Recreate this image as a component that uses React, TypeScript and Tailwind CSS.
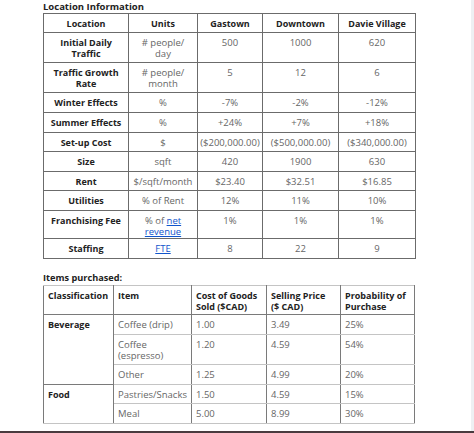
import React from "react";

const font = { fontFamily: '"Open Sans", "Noto Sans", sans-serif' };

type Row1 = { label: string; unit: React.ReactNode; g: string; d: string; v: string; h: string };

const rows1: Row1[] = [
  { label: "Initial Daily Traffic", unit: <>#&nbsp;people/<br />day</>, g: "500", d: "1000", v: "620", h: "h-[30px]" },
  { label: "Traffic Growth Rate", unit: <>#&nbsp;people/<br />month</>, g: "5", d: "12", v: "6", h: "h-[30px]" },
  { label: "Winter Effects", unit: "%", g: "-7%", d: "-2%", v: "-12%", h: "h-[20px]" },
  { label: "Summer Effects", unit: "%", g: "+24%", d: "+7%", v: "+18%", h: "h-[20px]" },
  { label: "Set-up Cost", unit: "$", g: "($200,000.00)", d: "($500,000.00)", v: "($340,000.00)", h: "h-[19px]" },
  { label: "Size", unit: "sqft", g: "420", d: "1900", v: "630", h: "h-[20px]" },
  { label: "Rent", unit: "$/sqft/month", g: "$23.40", d: "$32.51", v: "$16.85", h: "h-[19px]" },
  { label: "Utilities", unit: "% of Rent", g: "12%", d: "11%", v: "10%", h: "h-[20px]" },
  {
    label: "Franchising Fee",
    unit: (
      <>
        % of <span className="text-[#1155cc] underline">net</span>
        <br />
        <span className="text-[#1155cc] underline">revenue</span>
      </>
    ),
    g: "1%",
    d: "1%",
    v: "1%",
    h: "h-[28px]",
  },
  { label: "Staffing", unit: <span className="text-[#1155cc] underline">FTE</span>, g: "8", d: "22", v: "9", h: "h-[20px]" },
];

const c1 = "border border-[#6b6b6b] align-top text-center pt-[4px] pb-0 px-[2px] leading-[11px]";
const c2v = "border-x border-x-[#7a7a7a] border-y border-y-[#c4c4c4] align-top text-left pt-[4px] pb-0 px-[4px] leading-[11px]";

export default function App() {
  return (
    <div className="w-[474px] h-[433px] bg-white flex flex-col overflow-hidden" style={font}>
      <div className="flex flex-1 min-h-0">
        <div className="flex-1 pl-[43px]">
          <div className="text-[9.5px] leading-[13px] font-bold text-[#222] h-[13px]">Location Information</div>
          <table className="border-collapse table-fixed w-[373px] text-[9.5px]">
            <colgroup>
              <col className="w-[85px]" />
              <col className="w-[69px]" />
              <col className="w-[65px]" />
              <col className="w-[76px]" />
              <col className="w-[77px]" />
            </colgroup>
            <thead>
              <tr className="h-[19px] font-bold text-[#222] text-[9px]">
                <th className={c1}>Location</th>
                <th className={c1}>Units</th>
                <th className={c1}>Gastown</th>
                <th className={c1}>Downtown</th>
                <th className={c1}>Davie Village</th>
              </tr>
            </thead>
            <tbody>
              {rows1.map((r) => (
                <tr key={r.label} className={r.h}>
                  <td className={`${c1} font-bold text-[#222] text-[9px]`}>{r.label}</td>
                  <td className={`${c1} text-[#666]`}>{r.unit}</td>
                  <td className={`${c1} text-[#666]`}>{r.g}</td>
                  <td className={`${c1} text-[#666]`}>{r.d}</td>
                  <td className={`${c1} text-[#666]`}>{r.v}</td>
                </tr>
              ))}
            </tbody>
          </table>

          <div className="mt-[12px] text-[9.2px] leading-[13px] font-bold text-[#222] h-[14px]">Items purchased:</div>
          <table className="border-collapse table-fixed w-[372px] text-[9.5px] border border-[#6b6b6b]">
            <colgroup>
              <col className="w-[70px]" />
              <col className="w-[78px]" />
              <col className="w-[75px]" />
              <col className="w-[74px]" />
              <col className="w-[74px]" />
            </colgroup>
            <thead>
              <tr className="h-[29px] font-bold text-[#222] text-[9px]">
                <th className={`${c2v} border-b-[#7a7a7a] font-bold`}>Classification</th>
                <th className={`${c2v} border-b-[#7a7a7a] font-bold`}>Item</th>
                <th className={`${c2v} border-b-[#7a7a7a] font-bold`}>Cost of Goods<br />Sold ($CAD)</th>
                <th className={`${c2v} border-b-[#7a7a7a] font-bold`}>Selling Price<br />($ CAD)</th>
                <th className={`${c2v} border-b-[#7a7a7a] font-bold`}>Probability of<br />Purchase</th>
              </tr>
            </thead>
            <tbody className="text-[#666]">
              <tr className="h-[20px]">
                <td rowSpan={3} className={`${c2v} font-bold text-[#222] text-[9px] border-b-[#7a7a7a]`}>Beverage</td>
                <td className={c2v}>Coffee (drip)</td>
                <td className={c2v}>1.00</td>
                <td className={c2v}>3.49</td>
                <td className={c2v}>25%</td>
              </tr>
              <tr className="h-[30px]">
                <td className={c2v}>Coffee<br />(espresso)</td>
                <td className={c2v}>1.20</td>
                <td className={c2v}>4.59</td>
                <td className={c2v}>54%</td>
              </tr>
              <tr className="h-[20px]">
                <td className={c2v}>Other</td>
                <td className={c2v}>1.25</td>
                <td className={c2v}>4.99</td>
                <td className={c2v}>20%</td>
              </tr>
              <tr className="h-[19px]">
                <td rowSpan={2} className={`${c2v} font-bold text-[#222] text-[9px]`}>Food</td>
                <td className={c2v}>Pastries/Snacks</td>
                <td className={c2v}>1.50</td>
                <td className={c2v}>4.59</td>
                <td className={c2v}>15%</td>
              </tr>
              <tr className="h-[20px]">
                <td className={c2v}>Meal</td>
                <td className={c2v}>5.00</td>
                <td className={c2v}>8.99</td>
                <td className={c2v}>30%</td>
              </tr>
            </tbody>
          </table>
        </div>
        <div className="w-[3px] bg-[#eef0f3]" />
      </div>
      <div className="h-[2px] bg-[#4a3b3f]" />
    </div>
  );
}
